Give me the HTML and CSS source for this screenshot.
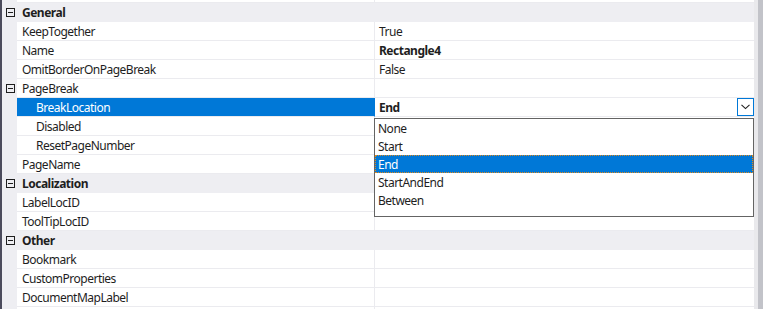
FILE: index.html
```html
<!DOCTYPE html>
<html>
<head>
<meta charset="utf-8">
<link rel="stylesheet" href="styles.css">
</head>
<body>
<div class="window">
  <div class="grid">
    <div class="row top"><div class="gutter"></div><div class="name"></div><div class="value"></div></div>

    <div class="row cat"><div class="gutter"><span class="toggle"></span></div><div class="name">General</div></div>
    <div class="row"><div class="gutter"></div><div class="name">KeepTogether</div><div class="value">True</div></div>
    <div class="row"><div class="gutter"></div><div class="name">Name</div><div class="value bold">Rectangle4</div></div>
    <div class="row"><div class="gutter"></div><div class="name">OmitBorderOnPageBreak</div><div class="value">False</div></div>
    <div class="row"><div class="gutter"><span class="toggle"></span></div><div class="name">PageBreak</div><div class="value"></div></div>
    <div class="row selected"><div class="gutter"></div><div class="name sub">BreakLocation</div><div class="value bold edit"><span class="val-text">End</span><span class="drop-btn"><svg width="9" height="6" viewBox="0 0 9 6"><polyline points="0.5,0.8 4.5,4.6 8.5,0.8" fill="none" stroke="#1e1e1e" stroke-width="1.1"/></svg></span></div></div>
    <div class="row"><div class="gutter"></div><div class="name sub">Disabled</div><div class="value"></div></div>
    <div class="row"><div class="gutter"></div><div class="name sub">ResetPageNumber</div><div class="value"></div></div>
    <div class="row"><div class="gutter"></div><div class="name">PageName</div><div class="value"></div></div>
    <div class="row cat"><div class="gutter"><span class="toggle"></span></div><div class="name">Localization</div></div>
    <div class="row"><div class="gutter"></div><div class="name">LabelLocID</div><div class="value"></div></div>
    <div class="row"><div class="gutter"></div><div class="name">ToolTipLocID</div><div class="value"></div></div>
    <div class="row cat"><div class="gutter"><span class="toggle"></span></div><div class="name">Other</div></div>
    <div class="row"><div class="gutter"></div><div class="name">Bookmark</div><div class="value"></div></div>
    <div class="row"><div class="gutter"></div><div class="name">CustomProperties</div><div class="value"></div></div>
    <div class="row"><div class="gutter"></div><div class="name">DocumentMapLabel</div><div class="value"></div></div>
    <div class="row"><div class="gutter"></div><div class="name"></div><div class="value"></div></div>

    <ul class="dropdown">
      <li>None</li>
      <li>Start</li>
      <li class="current">End</li>
      <li>StartAndEnd</li>
      <li>Between</li>
    </ul>
  </div>
  <div class="scroll"><div class="thumb"></div></div>
</div>
</body>
</html>
```

FILE: styles.css
```css
* { box-sizing: border-box; }
html, body {
  margin: 0;
  padding: 0;
  background: #ffffff;
  overflow: hidden;
}
body {
  font-family: "Noto Sans", "Open Sans", sans-serif;
  font-size: 12px;
  color: #1e1e1e;
  width: 763px;
  height: 309px;
}
.window {
  display: flex;
  height: 309px;
  border-left: 2px solid #4b4b5c;
}
.grid {
  position: relative;
  flex: 1;
  overflow: hidden;
}
.row {
  display: flex;
  height: 19px;
  line-height: 18px;
  letter-spacing: -0.5px;
}
.row.top {
  height: 3px;
}
.gutter {
  width: 15px;
  flex: none;
  background: #eeeef2;
  position: relative;
}
.toggle {
  position: absolute;
  left: 4px;
  top: 5px;
  width: 9px;
  height: 9px;
  border: 1px solid #1e1e1e;
}
.toggle::after {
  content: "";
  position: absolute;
  left: 1px;
  top: 3px;
  width: 5px;
  height: 1px;
  background: #1e1e1e;
}
.name {
  width: 358px;
  flex: none;
  padding-left: 5px;
  padding-top: 1px;
  border-bottom: 1px solid #ebebef;
  border-right: 1px solid #ebebef;
  white-space: nowrap;
  overflow: hidden;
}
.name.sub {
  padding-left: 19px;
}
.value {
  flex: 1;
  padding-left: 4px;
  padding-top: 1px;
  border-bottom: 1px solid #ebebef;
  white-space: nowrap;
}
.bold { font-weight: 700; }
.row.cat {
  background: #eeeef2;
}
.row.cat .name {
  flex: 1;
  font-weight: 700;
  border: none;
}
.row.selected .name {
  background: #0078d7;
  color: #ffffff;
  border-right-color: #0078d7;
}
.value.edit {
  display: flex;
  justify-content: space-between;
  padding-top: 0;
  padding-right: 0;
}
.val-text {
  padding-top: 1px;
}
.drop-btn {
  width: 17px;
  height: 18px;
  border: 1px solid #0078d7;
  background: #ffffff;
  display: flex;
  align-items: center;
  justify-content: center;
}
.dropdown {
  position: absolute;
  left: 372px;
  top: 118px;
  width: 380px;
  height: 99px;
  margin: 0;
  padding: 0;
  list-style: none;
  background: #ffffff;
  border: 1px solid #646464;
  letter-spacing: -0.5px;
}
.dropdown li {
  height: 18px;
  line-height: 17px;
  padding-left: 2px;
  border: 1px dotted transparent;
}
.dropdown li.current {
  background: #0078d7;
  color: #ffffff;
  border-color: #e08a1c;
}
.scroll {
  width: 9px;
  flex: none;
  background: #e9e9ec;
  display: flex;
  justify-content: flex-end;
}
.thumb {
  width: 5px;
  background: #c2c3c9;
}
```
